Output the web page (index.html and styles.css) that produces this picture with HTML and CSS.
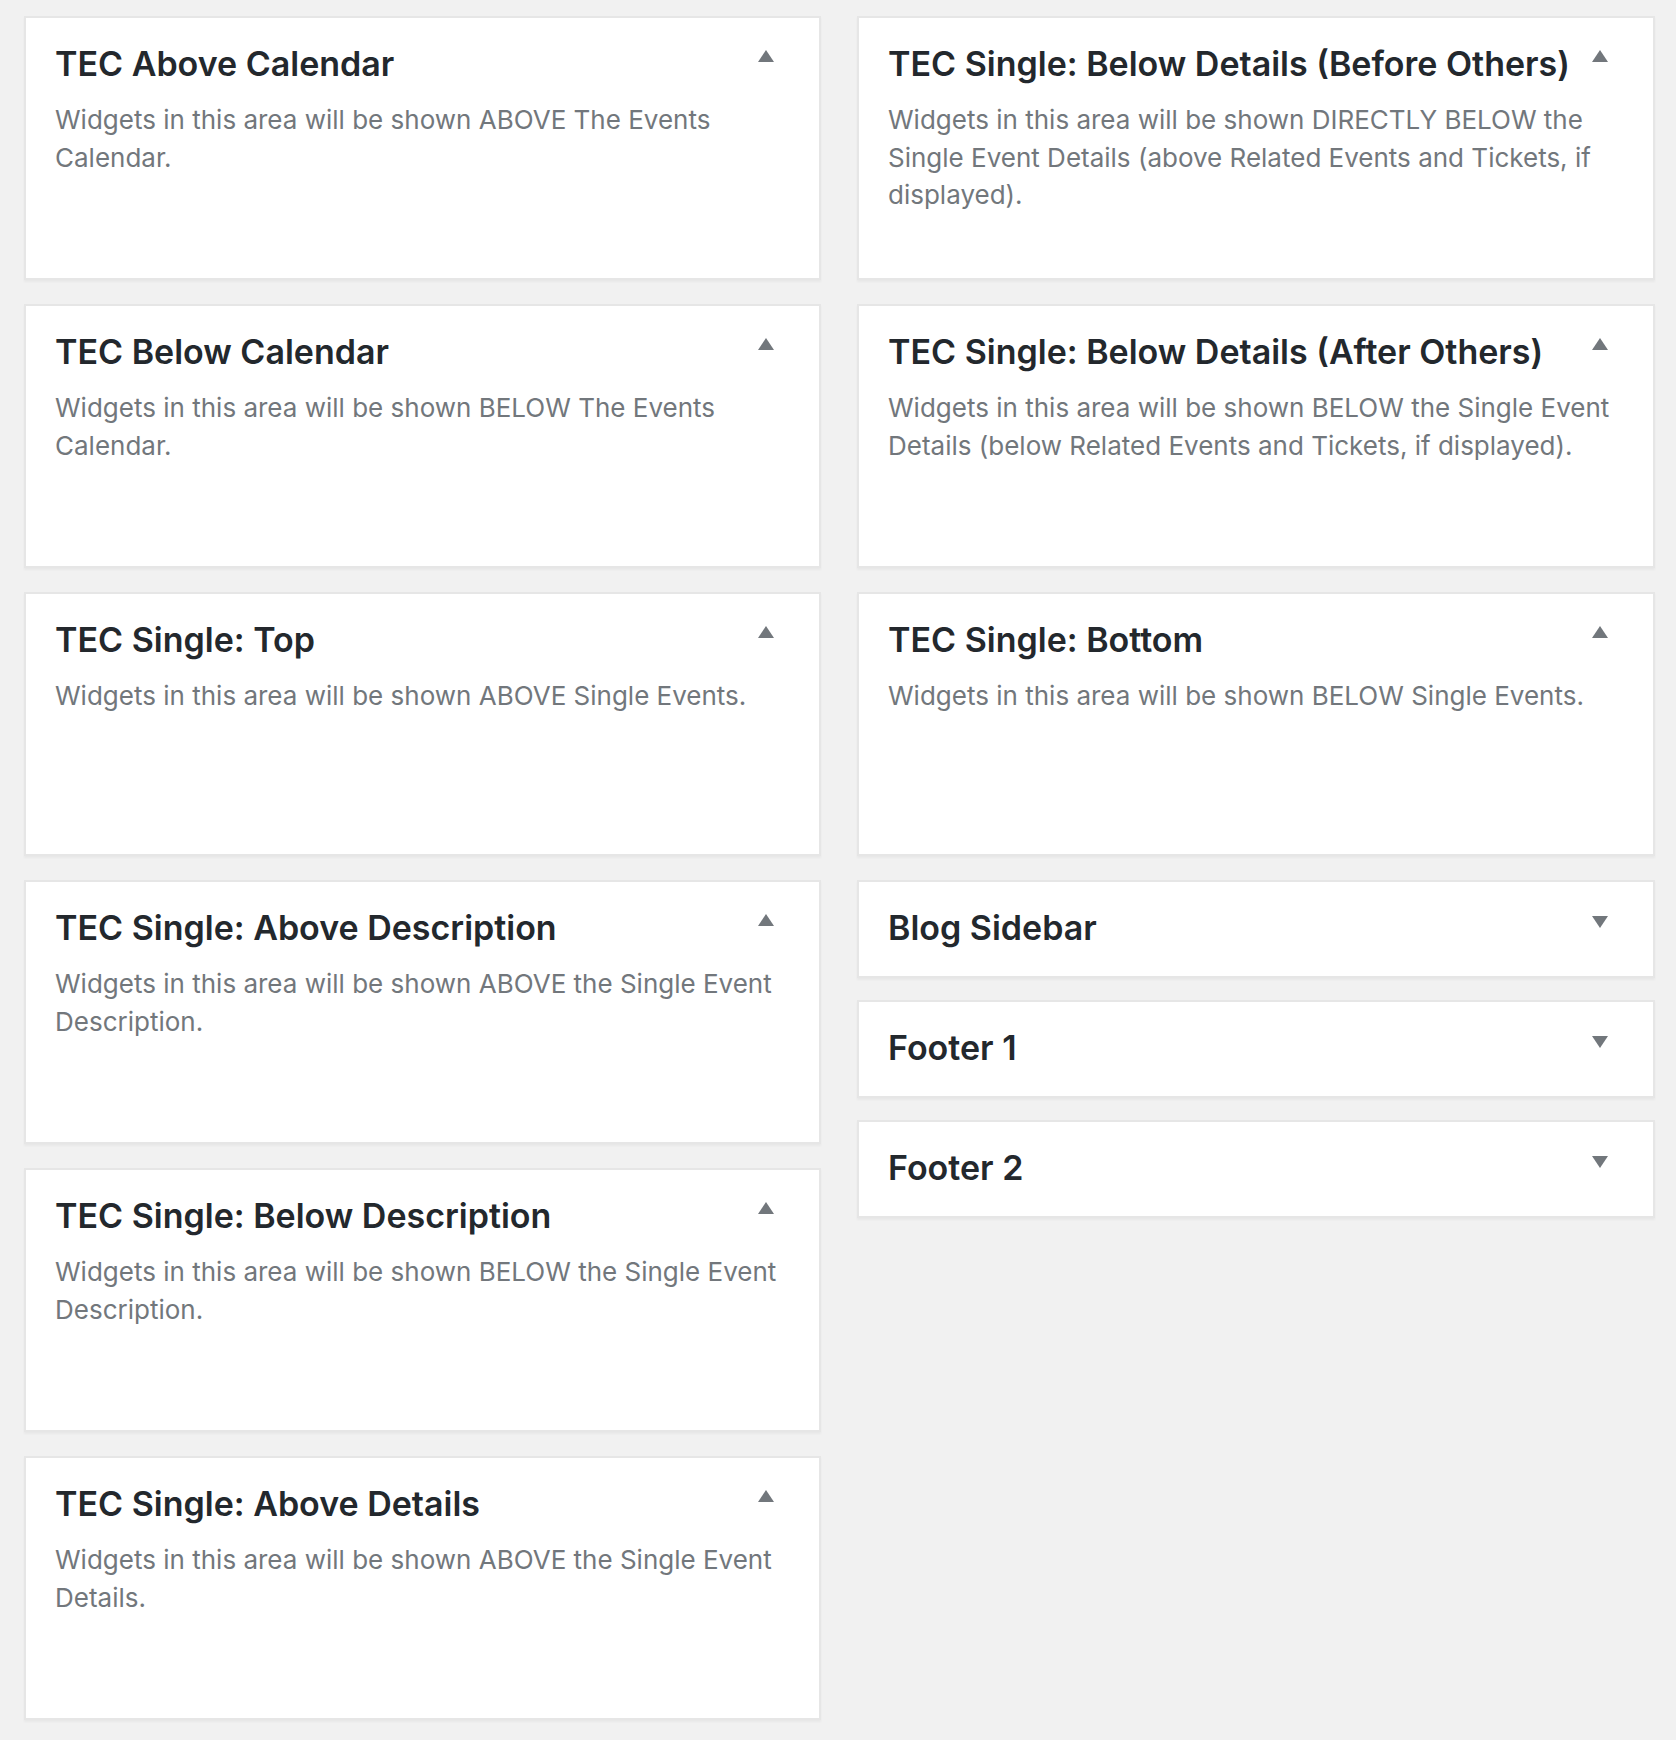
FILE: index.html
```html
<!DOCTYPE html>
<html lang="en">
<head>
<meta charset="utf-8">
<title>Widgets</title>
<link rel="stylesheet" href="styles.css">
</head>
<body>
<div class="widgets">
  <div class="column">
    <section class="area open">
      <div class="area-head"><h2>TEC Above Calendar</h2><span class="toggle up"><svg viewBox="0 0 16 12" width="16" height="12"><path d="M8 0 L16 12 L0 12 Z"/></svg></span></div>
      <p class="desc">Widgets in this area will be shown ABOVE The Events Calendar.</p>
    </section>
    <section class="area open">
      <div class="area-head"><h2>TEC Below Calendar</h2><span class="toggle up"><svg viewBox="0 0 16 12" width="16" height="12"><path d="M8 0 L16 12 L0 12 Z"/></svg></span></div>
      <p class="desc">Widgets in this area will be shown BELOW The Events Calendar.</p>
    </section>
    <section class="area open">
      <div class="area-head"><h2>TEC Single: Top</h2><span class="toggle up"><svg viewBox="0 0 16 12" width="16" height="12"><path d="M8 0 L16 12 L0 12 Z"/></svg></span></div>
      <p class="desc">Widgets in this area will be shown ABOVE Single Events.</p>
    </section>
    <section class="area open">
      <div class="area-head"><h2>TEC Single: Above Description</h2><span class="toggle up"><svg viewBox="0 0 16 12" width="16" height="12"><path d="M8 0 L16 12 L0 12 Z"/></svg></span></div>
      <p class="desc">Widgets in this area will be shown ABOVE the Single Event Description.</p>
    </section>
    <section class="area open">
      <div class="area-head"><h2>TEC Single: Below Description</h2><span class="toggle up"><svg viewBox="0 0 16 12" width="16" height="12"><path d="M8 0 L16 12 L0 12 Z"/></svg></span></div>
      <p class="desc">Widgets in this area will be shown BELOW the Single Event Description.</p>
    </section>
    <section class="area open">
      <div class="area-head"><h2>TEC Single: Above Details</h2><span class="toggle up"><svg viewBox="0 0 16 12" width="16" height="12"><path d="M8 0 L16 12 L0 12 Z"/></svg></span></div>
      <p class="desc">Widgets in this area will be shown ABOVE the Single Event Details.</p>
    </section>
  </div>
  <div class="column">
    <section class="area open">
      <div class="area-head"><h2>TEC Single: Below Details (Before Others)</h2><span class="toggle up"><svg viewBox="0 0 16 12" width="16" height="12"><path d="M8 0 L16 12 L0 12 Z"/></svg></span></div>
      <p class="desc">Widgets in this area will be shown DIRECTLY BELOW the Single Event Details (above Related Events and Tickets, if displayed).</p>
    </section>
    <section class="area open">
      <div class="area-head"><h2>TEC Single: Below Details (After Others)</h2><span class="toggle up"><svg viewBox="0 0 16 12" width="16" height="12"><path d="M8 0 L16 12 L0 12 Z"/></svg></span></div>
      <p class="desc">Widgets in this area will be shown BELOW the Single Event Details (below Related Events and Tickets, if displayed).</p>
    </section>
    <section class="area open">
      <div class="area-head"><h2>TEC Single: Bottom</h2><span class="toggle up"><svg viewBox="0 0 16 12" width="16" height="12"><path d="M8 0 L16 12 L0 12 Z"/></svg></span></div>
      <p class="desc">Widgets in this area will be shown BELOW Single Events.</p>
    </section>
    <section class="area closed">
      <div class="area-head"><h2>Blog Sidebar</h2><span class="toggle down"><svg viewBox="0 0 16 12" width="16" height="12"><path d="M0 0 L16 0 L8 12 Z"/></svg></span></div>
    </section>
    <section class="area closed">
      <div class="area-head"><h2>Footer 1</h2><span class="toggle down"><svg viewBox="0 0 16 12" width="16" height="12"><path d="M0 0 L16 0 L8 12 Z"/></svg></span></div>
    </section>
    <section class="area closed">
      <div class="area-head"><h2>Footer 2</h2><span class="toggle down"><svg viewBox="0 0 16 12" width="16" height="12"><path d="M0 0 L16 0 L8 12 Z"/></svg></span></div>
    </section>
  </div>
</div>
</body>
</html>
```

FILE: styles.css
```css
* { box-sizing: border-box; }

html, body {
  margin: 0;
  padding: 0;
  background: #f1f1f1;
}

body {
  font-family: Inter, "Noto Sans", "Liberation Sans", sans-serif;
  color: #23282d;
}

.widgets {
  display: grid;
  grid-template-columns: 797px 798px;
  column-gap: 36px;
  align-items: start;
  padding: 16px 0 0 24px;
}

.column {
  display: flex;
  flex-direction: column;
}

.area {
  background: #fff;
  border: 2px solid #e6e6e6;
  box-shadow: 0 2px 2px rgba(0, 0, 0, 0.04);
  padding: 26px 26px 0 29px;
}

.area.open {
  height: 264px;
  margin-bottom: 24px;
}

.area.closed {
  height: 98px;
  margin-bottom: 22px;
}

.area-head {
  display: flex;
  align-items: flex-start;
  gap: 12px;
  padding-right: 19px;
}

.area-head h2 {
  flex: 1;
  margin: 0;
  font-size: 34px;
  line-height: 40px;
  font-weight: 600;
  white-space: nowrap;
  color: #23282d;
}

.toggle {
  flex: none;
  width: 16px;
  height: 12px;
  display: block;
  fill: #72777c;
}

.toggle svg { display: block; }

.toggle.up { margin-top: 6px; }
.toggle.down { margin-top: 8px; }

.desc {
  margin: 17px 0 0;
  font-size: 26px;
  line-height: 37.5px;
  color: #72777c;
}
```
